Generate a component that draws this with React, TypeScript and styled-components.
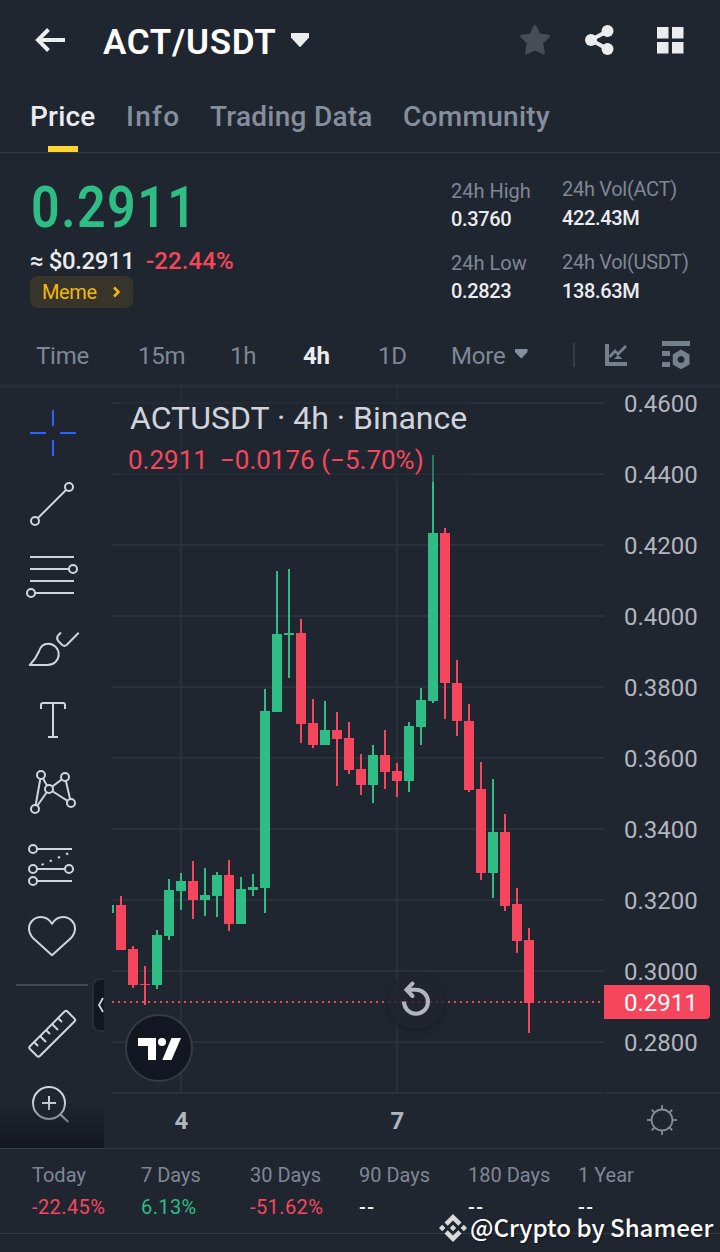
import React from 'react';
import styled, { createGlobalStyle } from 'styled-components';

const C = {
  bg: '#202630',
  line: '#333b47',
  grid: '#2b313b',
  text: '#eaecef',
  muted: '#848e9c',
  dim: '#7f8794',
  up: '#2ebd85',
  down: '#f6465d',
  axis: '#b2b5be',
  tool: '#d1d4dc',
  ink: '#131722',
};

const Global = createGlobalStyle`
  * { box-sizing: border-box; }
  body { margin: 0; background: ${C.bg}; }
`;

const Screen = styled.main`
  position: relative;
  display: flex;
  flex-direction: column;
  width: 720px;
  height: 1252px;
  overflow: hidden;
  background: ${C.bg};
  color: ${C.text};
  font-family: Roboto, 'Liberation Sans', sans-serif;
  white-space: nowrap;
`;

const Header = styled.header`
  display: flex;
  align-items: center;
  height: 80px;
  padding: 0 34px 0 34px;
`;

const Title = styled.h1`
  margin: 6px 15px 0 37px;
  font-size: 35px;
  line-height: 42px;
  font-weight: 600;
  letter-spacing: 0.7px;
  color: #fff;
  width: 172px;
`;

const HeaderActions = styled.div`
  display: flex;
  align-items: center;
  gap: 33px;
  margin-left: auto;
  & > :last-child { margin-left: 2px; }
  & > :first-child { margin-right: -1px; }
`;

const Tabs = styled.nav`
  display: grid;
  grid-template-columns: 96px 84px 193px auto;
  height: 73px;
  padding-left: 30px;
  border-bottom: 1px solid ${C.line};
`;

const Tab = styled.span<{ $active?: boolean; $track: number }>`
  position: relative;
  height: 72px;
  line-height: 73px;
  font-size: 28px;
  font-weight: 500;
  letter-spacing: ${(p) => p.$track}px;
  color: ${(p) => (p.$active ? C.text : C.muted)};
  &::after {
    content: '';
    display: ${(p) => (p.$active ? 'block' : 'none')};
    position: absolute;
    left: 18px;
    bottom: 0;
    width: 30px;
    height: 6px;
    background: #fcd535;
  }
`;

const Summary = styled.section`
  display: grid;
  grid-template-columns: 421px 111px 1fr;
  height: 172px;
  padding-left: 30px;
`;

const PriceBlock = styled.div`
  display: flex;
  flex-direction: column;
  align-items: flex-start;
  padding-top: 22px;
`;

const BigPrice = styled.div`
  height: 65px;
  margin-left: 1px;
  font-size: 57px;
  line-height: 66px;
  font-weight: 600;
  letter-spacing: 1.7px;
  transform: scaleX(0.88);
  transform-origin: left;
  color: ${C.up};
`;

const SubPrice = styled.div`
  display: flex;
  height: 36px;
  line-height: 43px;
  font-size: 24px;
  font-weight: 500;
`;

const Fiat = styled.span`
  width: 116px;
  letter-spacing: -0.4px;
`;

const Change = styled.span`
  letter-spacing: 0.1px;
  color: ${C.down};
`;

const Tag = styled.div`
  display: flex;
  align-items: center;
  justify-content: space-between;
  width: 103px;
  height: 32px;
  padding: 0 12px;
  border-radius: 8px;
  background: #37342c;
  color: #f0b90b;
  font-size: 20px;
  line-height: 32px;
  letter-spacing: -0.4px;
`;

const StatColumn = styled.dl<{ $top: number; $lead: number; $track: number }>`
  margin: 0;
  padding-top: ${(p) => p.$top}px;
  dt { letter-spacing: ${(p) => p.$track}px; }
  dd { padding-top: ${(p) => p.$lead}px; }
`;

const StatLabel = styled.dt`
  font-size: 20px;
  line-height: 28px;
  color: ${C.dim};
`;

const StatValue = styled.dd`
  margin: 0 0 16px;
  font-size: 20px;
  line-height: 28px;
  font-weight: 500;
  letter-spacing: -0.35px;
`;

const Intervals = styled.nav`
  display: grid;
  grid-template-columns: 102px 92px 73px 75px 72px 122px 31px 57px 30px;
  align-items: center;
  height: 59px;
  padding-left: 36px;
  & > :nth-child(6) { margin-left: 1px; }
  & > :nth-child(n + 7) { transform: translateX(1px); }
`;

const Interval = styled.span<{ $active?: boolean }>`
  display: flex;
  align-items: center;
  gap: 10px;
  font-size: 24px;
  line-height: 28px;
  padding-top: 2px;
  letter-spacing: -0.2px;
  font-weight: ${(p) => (p.$active ? 700 : 400)};
  color: ${(p) => (p.$active ? C.text : C.dim)};
  svg { margin-top: -4px; }
`;

const Separator = styled.i`
  width: 2px;
  height: 24px;
  background: #333b47;
`;

const ChartArea = styled.section`
  display: grid;
  grid-template-columns: 104px 616px;
  height: 764px;
`;

const Toolbar = styled.aside`
  position: relative;
  display: flex;
  flex-direction: column;
  border-top: 4px solid #262c35;
  padding: 8px 16px 0;
`;

const ToolDivider = styled.hr`
  width: 72px;
  height: 2px;
  margin: 12px 0;
  border: 0;
  background: #434852;
`;

const ToolFade = styled.div`
  position: absolute;
  left: 0;
  right: 0;
  bottom: 0;
  height: 48px;
  background: linear-gradient(to bottom, rgba(19, 23, 34, 0), ${C.ink});
`;

const CollapseHandle = styled.div`
  position: absolute;
  right: 0;
  top: 590px;
  display: flex;
  align-items: center;
  width: 12px;
  height: 54px;
  padding-left: 3px;
  border: 2px solid #2a2e39;
  border-right: 0;
  border-radius: 8px 0 0 8px;
  background: ${C.ink};
`;

const Plot = styled.div`
  position: relative;
  & > svg { display: block; }
`;

const Legend = styled.div`
  position: absolute;
  left: 24px;
  top: 15px;
  width: 316px;
`;

const LegendTitle = styled.div`
  padding-left: 2px;
  font-size: 32px;
  line-height: 38px;
  color: ${C.tool};
`;

const LegendQuote = styled.div`
  display: flex;
  gap: 12px;
  padding-top: 6px;
  font-size: 26px;
  line-height: 34px;
  color: ${C.down};
`;

const Badge = styled.div`
  position: absolute;
  left: 21px;
  top: 630px;
  width: 68px;
  height: 68px;
  border: 2px solid #363a45;
  border-radius: 50%;
  background: ${C.ink};
`;

const ResetButton = styled.div`
  position: absolute;
  left: 284px;
  top: 589px;
  width: 56px;
  height: 56px;
  border-radius: 50%;
  background: rgba(32, 36, 47, 0.78);
  box-shadow: 0 3px 6px rgba(18, 20, 30, 0.5);
`;

const Periods = styled.section`
  display: grid;
  grid-template-columns: 109px 109px 109px 109px 110px 1fr;
  height: 86px;
  padding: 12px 0 0 32px;
  border-top: 1px solid ${C.line};
  border-bottom: 1px solid ${C.line};
`;

const PeriodLabel = styled.div`
  font-size: 20px;
  line-height: 28px;
  color: ${C.dim};
`;

const PeriodValue = styled.div<{ $color: string; $empty: boolean }>`
  padding-top: 4px;
  font-size: 20px;
  line-height: 28px;
  font-weight: ${(p) => (p.$empty ? 500 : 400)};
  letter-spacing: ${(p) => (p.$empty ? 1.5 : 0.4)}px;
  color: ${(p) => p.$color};
`;

const Watermark = styled.div`
  position: absolute;
  left: 439px;
  top: 1210px;
  display: flex;
  align-items: center;
  gap: 3px;
  height: 36px;
  font-family: 'Noto Sans CJK SC', 'Noto Sans', sans-serif;
  font-size: 24.100px;
  font-weight: 500;
  line-height: 34px;
  color: #fff;
  text-shadow: 1px 1px 2px rgba(0, 0, 0, 0.5);
  span { margin-top: -3px; }
`;

/* body top, body bottom, wick top, wick bottom in canvas pixels; 1 = rising */
type Candle = [number, number, number, number, 0 | 1];
const candles: Candle[] = [
  [905, 950, 896, 950, 0], [949, 985, 946, 988, 0], [984, 985, 966, 1005, 0],
  [935, 985, 930, 989, 1], [890, 936, 879, 940, 1], [881, 891, 873, 910, 1],
  [881, 900, 861, 919, 0], [895, 900, 868, 916, 1], [875, 896, 872, 917, 1],
  [875, 924, 860, 931, 0], [889, 924, 877, 924, 1], [887, 890, 874, 896, 1],
  [711, 888, 689, 913, 1], [634, 712, 571, 712, 1], [633, 635, 569, 678, 1],
  [633, 724, 619, 743, 0], [723, 745, 699, 748, 0], [730, 745, 701, 745, 1],
  [730, 739, 712, 786, 0], [738, 770, 722, 774, 0], [769, 785, 754, 795, 0],
  [755, 785, 745, 803, 1], [755, 772, 730, 789, 0], [771, 781, 763, 797, 0],
  [726, 781, 722, 792, 1], [700, 727, 688, 745, 1], [533, 701, 455, 703, 1],
  [533, 683, 528, 719, 0], [683, 721, 660, 736, 0], [721, 790, 704, 792, 0],
  [789, 873, 762, 880, 0], [832, 873, 779, 898, 1], [832, 906, 814, 911, 0],
  [904, 941, 888, 953, 0], [940, 1003, 928, 1033, 0],
];

const levels = ['0.4600', '0.4400', '0.4200', '0.4000', '0.3800', '0.3600', '0.3400', '0.3200', '0.3000', '0.2800'];

function CandleChart() {
  return (
    <svg width="616" height="764" viewBox="104 384 616 764" fontFamily="Roboto, sans-serif" fontSize="24">
      <rect x="104" y="384" width="616" height="4" fill="#262c35" />
      {levels.map((l, i) => (
        <rect key={l} x="112" y={402 + i * 71} width="492" height="2" fill={C.grid} />
      ))}
      <rect x="180" y="384" width="2" height="708" fill={C.grid} />
      <rect x="396" y="384" width="2" height="708" fill={C.grid} />
      <rect x="120" y="388" width="350" height="94" fill={C.bg} opacity="0.5" />
      <rect x="112" y="1092" width="492" height="2" fill={C.grid} />
      <rect x="606" y="1092" width="114" height="2" fill={C.grid} />
      <rect x="112" y="905" width="2" height="8" fill={C.up} />
      {candles.map(([top, bottom, high, low, up], i) => (
        <g key={i} fill={up ? C.up : C.down}>
          <rect x={120 + i * 12} y={high} width="2" height={low - high} />
          <rect x={116 + i * 12} y={top} width="10" height={bottom - top} />
        </g>
      ))}
      <rect x="432" y="455" width="2" height="27" fill={C.bg} opacity="0.45" />
      <path d="M112 1002H602" stroke={C.down} strokeWidth="2" strokeDasharray="2 4" />
      {levels.map((l, i) => (
        <text key={l} x="624" y={412 + i * 71} fill={C.axis}>{l}</text>
      ))}
      <path d="M604 985h102a4 4 0 0 1 4 4v26a4 4 0 0 1-4 4H604z" fill={C.down} />
      <text x="624" y="1011" fill="#fff">0.2911</text>
      <g fill={C.axis} fontWeight="700" textAnchor="middle">
        <text x="181.500" y="1129">4</text>
        <text x="397.500" y="1129">7</text>
      </g>
      <g transform="translate(662 1120)" stroke="#868b95" strokeWidth="1.8" fill="none">
        <circle r="10.5" />
        {[0, 45, 90, 135, 180, 225, 270, 315].map((a) => (
          <path key={a} d={a % 90 ? 'M0-10.5V-14.5' : 'M0-10.5V-15'} transform={`rotate(${a})`} />
        ))}
      </g>
    </svg>
  );
}

const ToolSvg = styled.svg<{ $active?: boolean }>`
  display: block;
  flex: none;
  width: 72px;
  height: 72px;
  fill: none;
  stroke: ${(p) => (p.$active ? '#2962ff' : C.tool)};
  stroke-width: 2;
`;

const Node = ({ x, y }: { x: number; y: number }) => <circle cx={x} cy={y} r="4" fill={C.bg} />;

function DrawingTools() {
  return (
    <Toolbar>
      <ToolSvg viewBox="0 0 72 72" $active>
        <path d="M14 37H30M44 37H60M37 14V30M37 44V60" />
      </ToolSvg>
      <ToolSvg viewBox="0 0 72 72">
        <path d="M19 53L53 19" />
        <Node x={53} y={19} /><Node x={19} y={53} />
      </ToolSvg>
      <ToolSvg viewBox="0 0 72 72">
        <path d="M14 17H58M14 29H58M14 41H58M15 53H58" />
        <Node x={57} y={29} /><Node x={15} y={53} />
      </ToolSvg>
      <ToolSvg viewBox="0 0 72 72" strokeLinejoin="round">
        <path d="M13.800 53C17.800 49 20.800 44.500 22.900 39.500C24.500 34.500 28 31.800 32 31.800C38.200 31.800 42.700 36.500 42.700 42.300C42.700 48.500 37.800 53 31.500 53Z" />
        <path d="M45 20.500L41.800 23.800Q40.200 26.500 42.200 29L46.300 33Q48.400 34.700 50.600 33L62.700 20.800" />
      </ToolSvg>
      <ToolSvg viewBox="0 0 72 72">
        <path d="M25 25V21Q25 19 27 19H47Q49 19 49 21V25M37 19V53M32 53H42" />
      </ToolSvg>
      <ToolSvg viewBox="0 0 72 72">
        <path d="M19 53L25 19L33 33L49 21L55 47L33 33Z" />
        <Node x={25} y={19} /><Node x={49} y={21} /><Node x={33} y={33} /><Node x={55} y={47} /><Node x={19} y={53} />
      </ToolSvg>
      <ToolSvg viewBox="0 0 72 72">
        <path d="M17 21H56M17 41H53M17 53H56" />
        <path d="M25.500 36.800L53 25" strokeDasharray="2.400 6.500" />
        <Node x={17} y={21} /><Node x={17} y={41} /><Node x={53} y={41} /><Node x={17} y={53} />
      </ToolSvg>
      <ToolSvg viewBox="0 0 72 72" strokeLinejoin="round">
        <path d="M36 23.800C33 19 29 17 25 17C18 17 13 22.500 13 28.500C13 33 15 36 17.500 38.500L36 55.200L54.500 38.500C57 36 59 33 59 28.500C59 22.500 54 17 47 17C43 17 39 19 36 23.800Z" />
      </ToolSvg>
      <ToolDivider />
      <ToolSvg viewBox="0 0 72 72">
        <rect x="-26.500" y="-7" width="53" height="14" rx="2" transform="translate(36.200 35.800) rotate(-45)" />
        <path d="M18 44L22 48M24 38L30 44M30 32L34 36M36 26L42 32M42 20L46 24" />
      </ToolSvg>
      <ToolSvg viewBox="0 0 72 72">
        <circle cx="33" cy="33" r="16" />
        <path d="M33 26V40M26 33H40M44.500 44.500L52.300 52" />
      </ToolSvg>
      <ToolFade />
      <CollapseHandle>
        <svg width="7" height="16" viewBox="0 0 7 16" fill="none" stroke={C.tool} strokeWidth="1.8"><path d="M6 1L2 8L6 15" /></svg>
      </CollapseHandle>
    </Toolbar>
  );
}

const statColumns = [
  { top: 24, lead: 0, track: 0, rows: [['24h High', '0.3760'], ['24h Low', '0.2823']] },
  { top: 22, lead: 1, track: -0.3, rows: [['24h Vol(ACT)', '422.43M'], ['24h Vol(USDT)', '138.63M']] },
];

const periods: [string, string, string][] = [
  ['Today', '-22.45%', C.down],
  ['7 Days', '6.13%', C.up],
  ['30 Days', '-51.62%', C.down],
  ['90 Days', '--', C.text],
  ['180 Days', '--', C.text],
  ['1 Year', '--', C.text],
];

export default function App() {
  return (
    <Screen>
      <Global />
      <Header>
        <svg width="32" height="26" viewBox="34 27 32 26" fill="none" stroke={C.text} strokeWidth="4">
          <path d="M65 40H38M48.500 29.500L38 40L48.500 50.500" />
        </svg>
        <Title>ACT/USDT</Title>
        <svg width="20" height="16" viewBox="290 32 20 16" fill={C.text}>
          <path d="M291 33H309V37.500L300.800 46.500Q300 47 299.200 46.500L291 37.500Z" />
        </svg>
        <HeaderActions>
          <svg width="32" height="32" viewBox="-16 -16 32 32" fill="#474d57" stroke="#474d57" strokeWidth="3" strokeLinejoin="round">
            <path d="M0-13.500L4-5L13.400-3.800L6.600 2.800L8.300 13L0 8.500L-8.300 13L-6.600 2.800L-13.400-3.800L-4-5Z" />
          </svg>
          <svg width="32" height="32" viewBox="583 24 32 32" fill={C.text}>
            <path d="M607.500 31L591 40L607.500 49" fill="none" stroke={C.text} strokeWidth="4" />
            <circle cx="607.500" cy="31" r="6" /><circle cx="591" cy="40" r="6" /><circle cx="607.500" cy="49" r="6" />
          </svg>
          <svg width="36" height="32" viewBox="650 24 36 32" fill={C.text}>
            <path d="M657 27h11.500v11.500h-11.500zM672 27h11.500v11.500h-11.500zM657 42h11.500v11.500h-11.500zM672 42h11.500v11.500h-11.500z" />
          </svg>
        </HeaderActions>
      </Header>
      <Tabs>
        <Tab $active $track={0.2}>Price</Tab>
        <Tab $track={1.3}>Info</Tab>
        <Tab $track={0.25}>Trading Data</Tab>
        <Tab $track={0.3}>Community</Tab>
      </Tabs>
      <Summary>
        <PriceBlock>
          <BigPrice>0.2911</BigPrice>
          <SubPrice><Fiat>≈ $0.2911</Fiat><Change>-22.44%</Change></SubPrice>
          <Tag>
            Meme
            <svg width="10" height="14" viewBox="0 0 10 14" fill="none" stroke="#f0b90b" strokeWidth="2.500"><path d="M3 2.500L7.500 7L3 11.500" /></svg>
          </Tag>
        </PriceBlock>
        {statColumns.map((col) => (
          <StatColumn key={col.top} $top={col.top} $lead={col.lead} $track={col.track}>
            {col.rows.map(([label, value]) => (
              <React.Fragment key={label}>
                <StatLabel>{label}</StatLabel>
                <StatValue>{value}</StatValue>
              </React.Fragment>
            ))}
          </StatColumn>
        ))}
      </Summary>
      <Intervals>
        <Interval>Time</Interval>
        <Interval>15m</Interval>
        <Interval>1h</Interval>
        <Interval $active>4h</Interval>
        <Interval>1D</Interval>
        <Interval>
          More
          <svg width="13" height="10" viewBox="0 0 13 10" fill={C.muted}><path d="M0 0H12.500V3L6.800 9Q6.250 9.500 5.700 9L0 3Z" /></svg>
        </Interval>
        <Separator />
        <svg width="24" height="24" viewBox="604 342 24 24" fill="none" stroke="#76808d" strokeWidth="4">
          <path d="M607 343V363H627" />
          <path d="M609.500 356L615 350L618 353L626 345" strokeWidth="2.800" />
          <path d="M614 358L618 354L622.500 358Z" fill="#76808d" stroke="none" />
        </svg>
        <svg width="30" height="30" viewBox="661 340 30 30" fill="#76808d">
          <path d="M662 341h28v5h-28zM662 351h8v5h-8zM662 362h8v5h-8z" />
          <path fillRule="evenodd" d="M681 349.500L689.500 354.500V364.500L681 369.300L672.800 364.500V354.500ZM681 356a3.500 3.500 0 1 0 .01 0Z" />
        </svg>
      </Intervals>
      <ChartArea>
        <DrawingTools />
        <Plot>
          <CandleChart />
          <Legend>
            <LegendTitle>ACTUSDT · 4h · Binance</LegendTitle>
            <LegendQuote><span>0.2911</span><span>−0.0176 (−5.70%)</span></LegendQuote>
          </Legend>
          <Badge>
            <svg width="64" height="64" viewBox="127 1016 64 64" fill="#fff">
              <path d="M138 1038H156V1060H148V1046H138Z" />
              <circle cx="162" cy="1042" r="4" />
              <path d="M171.500 1038H181L171.500 1060H162.300Z" />
            </svg>
          </Badge>
          <ResetButton>
            <svg width="56" height="56" viewBox="388 973 56 56" fill="none" stroke={C.axis} strokeWidth="4">
              <path d="M404 1001.500A12 12 0 1 0 416 989.700H408" />
              <path d="M412.500 983.500L406.500 989.700L412.500 996" strokeLinecap="round" />
            </svg>
          </ResetButton>
        </Plot>
      </ChartArea>
      <Periods>
        {periods.map(([label, value, color]) => (
          <div key={label}>
            <PeriodLabel>{label}</PeriodLabel>
            <PeriodValue $color={color} $empty={value === '--'}>{value}</PeriodValue>
          </div>
        ))}
      </Periods>
      <Watermark>
        <svg width="28" height="28" viewBox="-14 -14 28 28" fill="#d9d9dc">
          <path d="M0-14L8.500-5.500L5.300-2.300L0-7.500L-5.300-2.300L-8.500-5.500ZM0 14L8.500 5.500L5.300 2.300L0 7.500L-5.300 2.300L-8.500 5.500ZM0-3.200L3.200 0L0 3.200L-3.200 0ZM-10.800-3.200L-7.600 0L-10.800 3.200L-14 0ZM10.800-3.200L14 0L10.800 3.200L7.600 0Z" />
        </svg>
        <span>@Crypto by Shameer</span>
      </Watermark>
    </Screen>
  );
}
